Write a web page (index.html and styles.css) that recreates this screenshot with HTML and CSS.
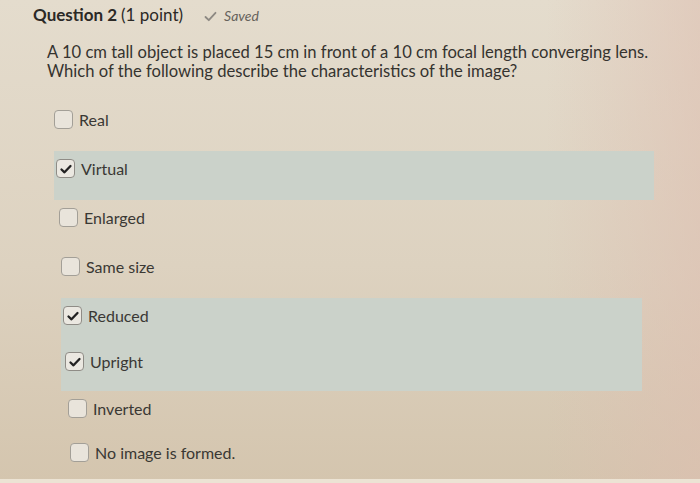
FILE: index.html
```html
<!DOCTYPE html>
<html>
<head>
<meta charset="utf-8">
<link rel="stylesheet" href="styles.css">
</head>
<body>
<div class="page">
  <div class="header">
    <span class="qtitle">Question 2</span>
    <span class="qpoints">(1 point)</span>
    <span class="saved">
      <svg class="savedcheck" width="13" height="11" viewBox="0 0 13 11"><path d="M1.5 6 L4.8 9.2 L11.5 1.8" fill="none" stroke="#8d8983" stroke-width="1.8" stroke-linecap="round" stroke-linejoin="round"/></svg>
      <span class="savedtext">Saved</span>
    </span>
  </div>
  <p class="question">A 10 cm tall object is placed 15 cm in front of a 10 cm focal length converging lens.<br>Which of the following describe the characteristics of the image?</p>
  <div class="options">
    <div class="opt"><span class="box"></span><span class="label">Real</span></div>
    <div class="opt sel"><span class="box on"><svg width="14" height="12" viewBox="0 0 14 12"><path d="M2.5 6.5 L5.5 9.3 L11.5 3" fill="none" stroke="#222" stroke-width="2.3" stroke-linecap="round" stroke-linejoin="round"/></svg></span><span class="label">Virtual</span></div>
    <div class="opt"><span class="box"></span><span class="label">Enlarged</span></div>
    <div class="opt"><span class="box"></span><span class="label">Same size</span></div>
    <div class="opt sel"><span class="box on"><svg width="14" height="12" viewBox="0 0 14 12"><path d="M2.5 6.5 L5.5 9.3 L11.5 3" fill="none" stroke="#222" stroke-width="2.3" stroke-linecap="round" stroke-linejoin="round"/></svg></span><span class="label">Reduced</span></div>
    <div class="opt sel"><span class="box on"><svg width="14" height="12" viewBox="0 0 14 12"><path d="M2.5 6.5 L5.5 9.3 L11.5 3" fill="none" stroke="#222" stroke-width="2.3" stroke-linecap="round" stroke-linejoin="round"/></svg></span><span class="label">Upright</span></div>
    <div class="opt"><span class="box"></span><span class="label">Inverted</span></div>
    <div class="opt"><span class="box"></span><span class="label">No image is formed.</span></div>
  </div>
</div>
</body>
</html>
```

FILE: styles.css
```css
html, body {
  margin: 0;
  padding: 0;
}
body {
  width: 700px;
  height: 483px;
  overflow: hidden;
  font-family: Lato, "Open Sans", sans-serif;
  color: #3a3834;
  background:
    linear-gradient(to right, rgba(0,0,0,0) 78%, rgba(222,190,176,0.55) 100%),
    linear-gradient(to bottom, #e4dccd 0%, #ddd2c0 55%, #d4c5ae 100%);
}
.page {
  height: 479px;
  border-bottom: 4px solid #ece3d4;
}
.header {
  display: flex;
  align-items: baseline;
  padding: 4px 0 0 33px;
  height: 25px;
}
.qtitle {
  font-weight: 700;
  font-size: 17px;
  color: #2b2926;
}
.qpoints {
  font-size: 17px;
  margin-left: 4px;
  color: #2b2926;
}
.saved {
  margin-left: 21px;
  display: flex;
  align-items: baseline;
  gap: 7px;
}
.savedcheck {
  position: relative;
  top: 1px;
}
.savedtext {
  font-style: italic;
  font-size: 14px;
  color: #66625c;
}
.question {
  margin: 14px 0 0 47px;
  font-size: 16.6px;
  line-height: 19px;
  color: #35332f;
}
.options {
  margin-top: 21px;
  display: flex;
  flex-direction: column;
}
.opt {
  display: flex;
  align-items: flex-start;
  height: 49px;
  padding: 8px 0 0 2px;
  box-sizing: border-box;
  font-size: 16px;
}
.opt:nth-child(n+5) { height: 46px; }
.opt:nth-child(6) { height: 47px; }
.opt:nth-child(7) { height: 44px; }
.opt.sel {
  background: #cbd2ca;
}
.opt:nth-child(1) { margin: 0 48px 0 52px; }
.opt:nth-child(2) { margin: 0 46px 0 54px; }
.opt:nth-child(3) { margin: 0 50px 0 57px; }
.opt:nth-child(4) { margin: 0 53px 0 59px; }
.opt:nth-child(5) { margin: 0 58px 0 61px; }
.opt:nth-child(6) { margin: 0 58px 0 61px; padding-left: 4px; }
.opt:nth-child(7) { margin: 0 64px 0 66px; }
.opt:nth-child(8) { margin: 0 67px 0 68px; }
.box {
  width: 19px;
  height: 19px;
  box-sizing: border-box;
  border: 1.5px solid #a39f97;
  border-radius: 4px;
  background: #e9e4db;
  display: flex;
  align-items: center;
  justify-content: center;
  flex: none;
}
.box.on {
  background: #ebe8e1;
  border-color: #8f8c86;
}
.label {
  margin-left: 6px;
  line-height: 19px;
  color: #3a3834;
}
```
